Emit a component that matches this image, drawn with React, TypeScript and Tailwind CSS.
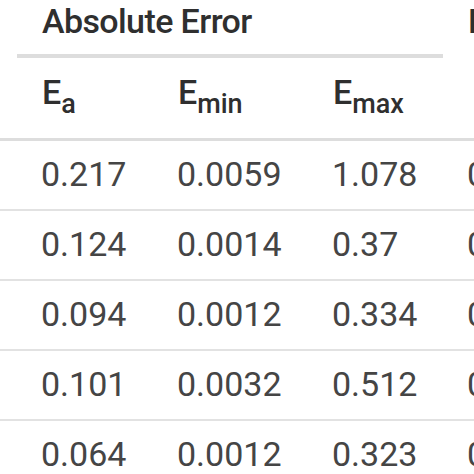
const rows = [
  ["0.217", "0.0059", "1.078", "0.0"],
  ["0.124", "0.0014", "0.37", "0.0"],
  ["0.094", "0.0012", "0.334", "0.0"],
  ["0.101", "0.0032", "0.512", "0.0"],
  ["0.064", "0.0012", "0.323", "0.0"],
];

const widths = ["w-[136px]", "w-[155px]", "w-[135px]", "w-[160px]"];

function Sym({ sub }: { sub: string }) {
  return (
    <span>
      E<span className="text-[27px] align-[-9px]">{sub}</span>
    </span>
  );
}

export default function App() {
  return (
    <div className="w-[474px] h-[474px] overflow-hidden bg-white font-['Roboto',sans-serif]">
      <div className="flex h-[54px] pt-[4px] text-[34px] leading-[34px] font-medium text-[#2f2f2f] whitespace-nowrap tracking-[-0.6px]">
        <div className="w-[426px] shrink-0 pl-[42px]">Absolute Error</div>
        <div className="shrink-0 pl-[42px]">Relative Error</div>
      </div>
      <div className="ml-[17px] w-[426px] h-[4px] bg-[#dddddd]" />

      <div className="flex h-[83px] pt-[17px] text-[34px] leading-[34px] font-medium text-[#2f2f2f] whitespace-nowrap border-b-[3px] border-[#dddddd]">
        <div className={`${widths[0]} shrink-0 pl-[42px]`}><Sym sub="a" /></div>
        <div className={`${widths[1]} shrink-0 pl-[42px]`}><Sym sub="min" /></div>
        <div className={`${widths[2]} shrink-0 pl-[42px]`}><Sym sub="max" /></div>
        <div className={`${widths[3]} shrink-0 pl-[42px]`} />
      </div>

      {rows.map((r, i) => (
        <div
          key={i}
          className="flex h-[70px] pt-[16px] text-[34px] leading-[34px] text-[#454545] whitespace-nowrap border-b-2 border-[#e2e2e2]"
        >
          {r.map((v, j) => (
            <div key={j} className={`${widths[j]} shrink-0 pl-[41px]`}>
              {v}
            </div>
          ))}
        </div>
      ))}
    </div>
  );
}
